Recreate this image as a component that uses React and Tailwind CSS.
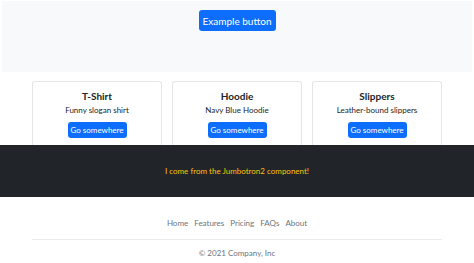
const products = [
  { title: 'T-Shirt', text: 'Funny slogan shirt' },
  { title: 'Hoodie', text: 'Navy Blue Hoodie' },
  { title: 'Slippers', text: 'Leather-bound slippers' },
];

const links = ['Home', 'Features', 'Pricing', 'FAQs', 'About'];

const App = () => {
  return (
    <div className="w-[474px] h-[263px] overflow-hidden bg-white font-['Lato',sans-serif]">
      {/* Jumbotron */}
      <div className="h-[71px] mx-[2px] mt-px bg-[#f8f9fa] flex justify-center pt-[9px]">
        <button className="h-[21px] w-[77px] rounded-[3px] bg-[#0d6efd] text-white text-[10px] leading-none">
          Example button
        </button>
      </div>

      {/* Cards */}
      <div className="mt-[9px] flex justify-center gap-[10px]">
        {products.map((p) => (
          <div key={p.title} className="w-[130px] h-[64px] border border-b-0 border-[#e6e6e6] rounded-t-[3px] flex flex-col items-center pt-[8px]">
            <div className="text-[10px] font-bold text-[#212529] leading-[13px]">{p.title}</div>
            <div className="mt-[1px] text-[8px] text-[#212529] leading-[12px]">{p.text}</div>
            <button className="mt-[6px] h-[16px] w-[59px] rounded-[3px] bg-[#0d6efd] text-white text-[8px] leading-none">
              Go somewhere
            </button>
          </div>
        ))}
      </div>

      {/* Jumbotron2 */}
      <div className="h-[52px] bg-[#212529] flex items-center justify-center">
        <span className="text-[8px] text-[#ffc107]">I come from the Jumbotron2 component!</span>
      </div>

      {/* Footer */}
      <footer className="px-[32px] pt-[20px]">
        <nav className="flex justify-center gap-[6px] text-[8px] text-[#6c757d] leading-[12px]">
          {links.map((l) => (
            <a key={l} href="#">{l}</a>
          ))}
        </nav>
        <div className="mt-[10px] border-t border-[#e9ecef]" />
        <p className="mt-[7px] text-center text-[8px] text-[#6c757d] leading-[12px]">© 2021 Company, Inc</p>
      </footer>
    </div>
  );
};

export default App;
